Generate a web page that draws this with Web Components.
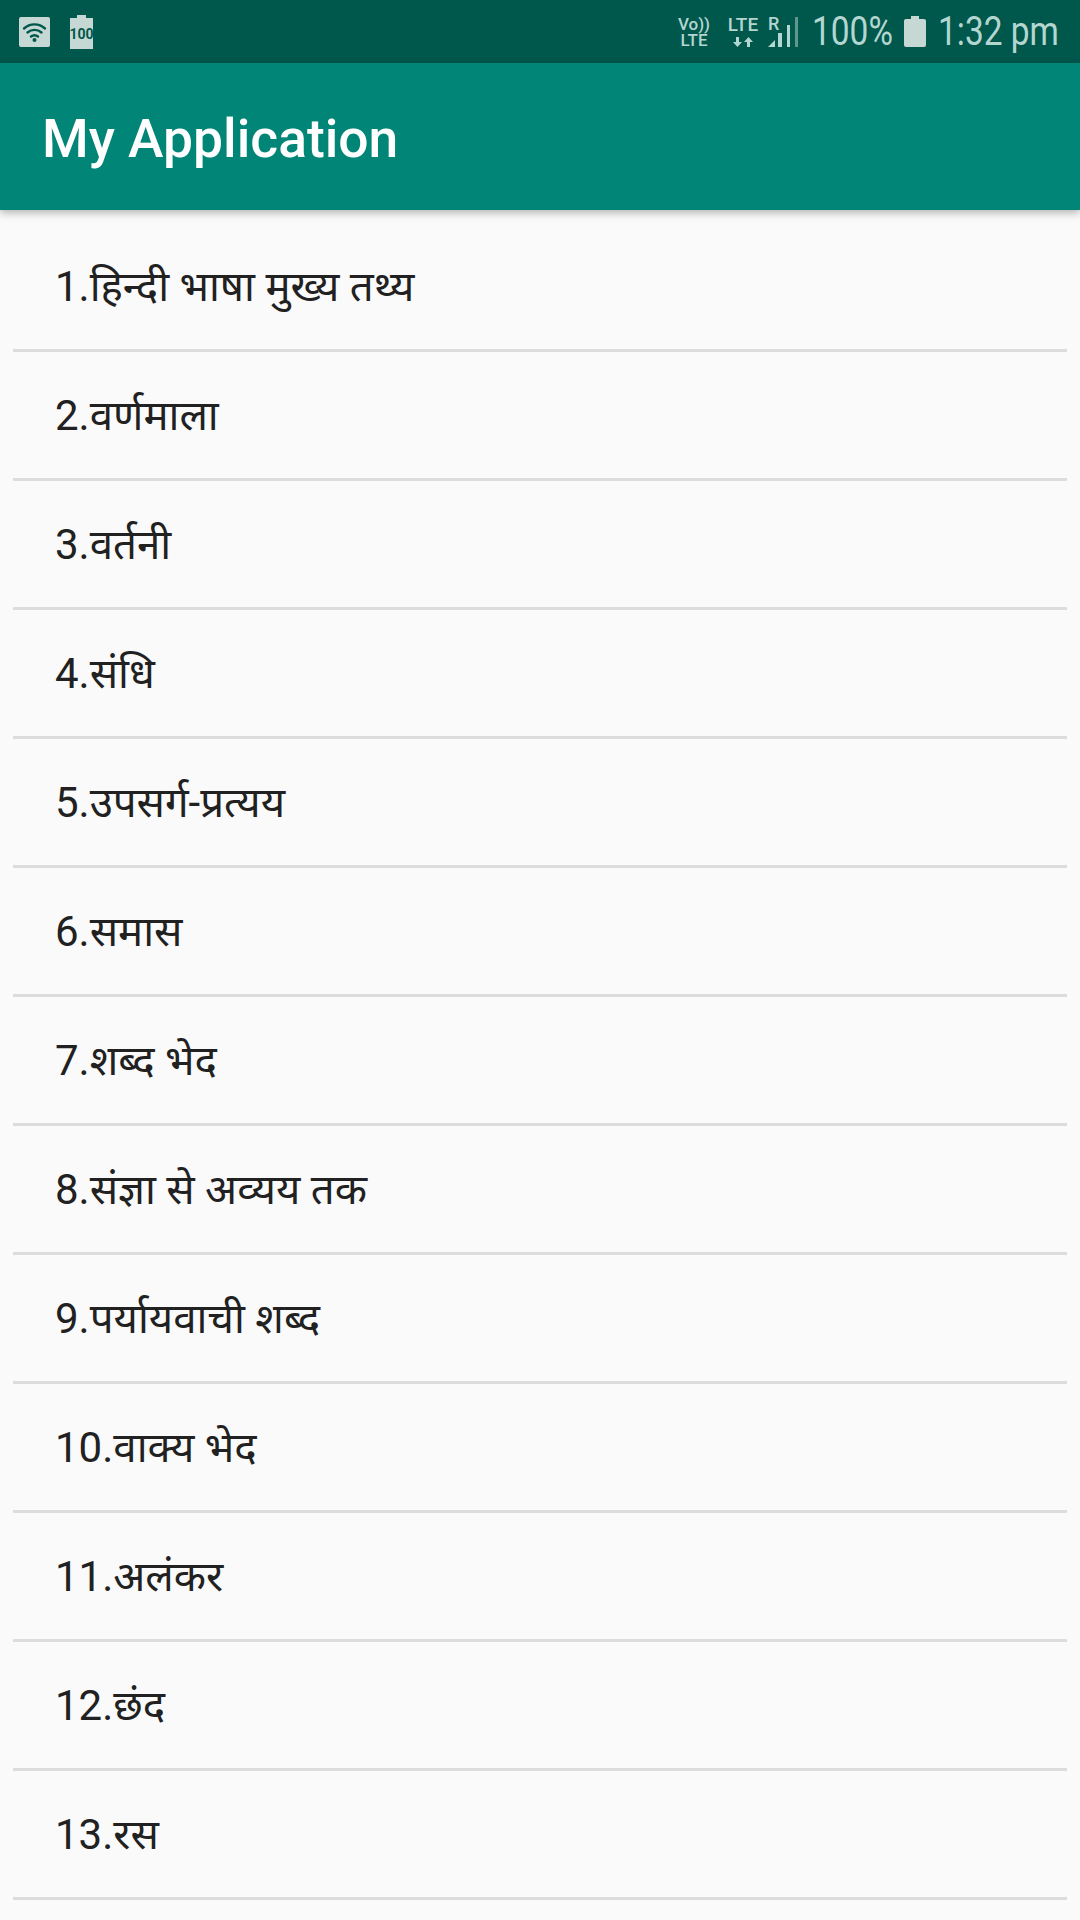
<!DOCTYPE html>
<html><head><meta charset="utf-8">
<style>
html,body{margin:0;padding:0;background:#fafafa;width:1080px;height:1920px;overflow:hidden}
app-shell{width:1080px;height:1920px}
</style></head>
<body>
<app-shell>
<status-bar slot="status"></status-bar>
<app-bar slot="bar">My Application</app-bar>
<topic-list>
<topic-row>1.हिन्दी भाषा मुख्य तथ्य</topic-row>
<topic-row>2.वर्णमाला</topic-row>
<topic-row>3.वर्तनी</topic-row>
<topic-row>4.संधि</topic-row>
<topic-row>5.उपसर्ग-प्रत्यय</topic-row>
<topic-row>6.समास</topic-row>
<topic-row>7.शब्द भेद</topic-row>
<topic-row>8.संज्ञा से अव्यय तक</topic-row>
<topic-row>9.पर्यायवाची शब्द</topic-row>
<topic-row>10.वाक्य भेद</topic-row>
<topic-row>11.अलंकर</topic-row>
<topic-row>12.छंद</topic-row>
<topic-row>13.रस</topic-row>
</topic-list>
</app-shell>
<script>
function def(name, html){
  customElements.define(name, class extends HTMLElement{
    constructor(){super();this.attachShadow({mode:'open'}).innerHTML=html;}
  });
}
def('app-shell',`<style>:host{display:flex;flex-direction:column;font-family:Roboto,"Noto Sans","Noto Sans Devanagari",sans-serif;overflow:hidden}</style><slot name="status"></slot><slot name="bar"></slot><slot></slot>`);
def('status-bar',`<style>
:host{display:flex;align-items:center;height:63px;background:#00574b;color:#b4d6d0;flex:none;box-sizing:border-box;padding:0 22px 0 19px}
svg{display:block;flex:none}
.bat{position:relative;width:23px;height:34px;margin-left:20px}
.bat span{position:absolute;left:-3px;right:-3px;top:11px;text-align:center;font:700 14px/16px Roboto,sans-serif;color:#00574b}
.sp{flex:1}
.volte{width:34px;height:32px;margin-right:15px;font:500 17px/16px Roboto,sans-serif;white-space:pre;text-align:center}
.lte{display:flex;flex-direction:column;align-items:center;width:34px;font:500 19px/17px Roboto,sans-serif;margin-right:6px;height:32px}
.lte svg{margin-top:4px}
.sig{position:relative;width:33px;height:32px;margin-right:13px}
.sig b{position:absolute;left:2px;top:-1px;font:500 18px/18px Roboto,sans-serif}
.txt{display:block;font:400 40px/44px Roboto,sans-serif;white-space:nowrap;transform:scaleX(.836);transform-origin:0 50%;flex:none;margin-top:1px}
.pct{width:80px}.time{width:120px}
</style>
<svg width="31" height="30" viewBox="0 0 31 30"><rect width="31" height="30" rx="2" fill="#c6d8d4"/><g fill="none" stroke="#00574b" stroke-width="2.4" stroke-linecap="round"><path d="M5 11.500C11 6 20 6 26 11.500"/><path d="M8.500 15.500C12.500 12 18.500 12 22.500 15.500"/><path d="M12 19.500C14 18 17 18 19 19.500"/></g><circle cx="15.500" cy="23" r="2" fill="#00574b"/></svg>
<div class="bat"><svg width="23" height="34" viewBox="0 0 23 34"><path d="M7 0h9v3h7v31H0V3h7z" fill="#c6d8d4"/></svg><span>100</span></div>
<div class="sp"></div>
<div class="volte">Vo))
LTE</div>
<div class="lte"><span>LTE</span><svg width="20" height="10" viewBox="0 0 20 10" fill="#b4d6d0"><path d="M3 0h3v5h3L4.500 10 0 5h3zM14 10V5h-3l4.500-5L20 5h-3v5z"/></svg></div>
<div class="sig"><b>R</b><svg width="33" height="32" viewBox="0 0 33 32"><path d="M2 31l7-7v7z" fill="#b4d6d0"/><rect x="12" y="17" width="4" height="14" fill="#b4d6d0"/><rect x="21" y="9" width="3" height="22" fill="#b4d6d0"/><rect x="29" y="1" width="3" height="30" fill="#5f968d"/></svg></div>
<span class="txt pct">100%</span>
<svg style="margin:0 12px" width="22" height="31" viewBox="0 0 22 31"><path d="M7 0h8v3h5a2 2 0 0 1 2 2v24a2 2 0 0 1-2 2H2a2 2 0 0 1-2-2V5a2 2 0 0 1 2-2h5z" fill="#c6d8d4"/></svg>
<span class="txt time">1:32 pm</span>`);
def('app-bar',`<style>:host{display:flex;align-items:center;height:147px;flex:none;box-sizing:border-box;padding:5px 0 0 42px;background:#008577;color:#fff;font:500 53.4px/60px Roboto,sans-serif;box-shadow:0 3px 8px rgba(0,0,0,.28);position:relative;z-index:1}</style><slot></slot>`);
def('topic-list',`<style>:host{display:flex;flex-direction:column;padding:13px 13px 0;background:#fafafa;flex:1}</style><slot></slot>`);
def('topic-row',`<style>:host{display:flex;align-items:center;height:129px;flex:none;box-sizing:border-box;border-bottom:3px solid #dcdcdc;padding:2px 0 0 42px;color:#212121;font-size:42px;line-height:60px;white-space:nowrap}</style><slot></slot>`);
</script>
</body></html>
